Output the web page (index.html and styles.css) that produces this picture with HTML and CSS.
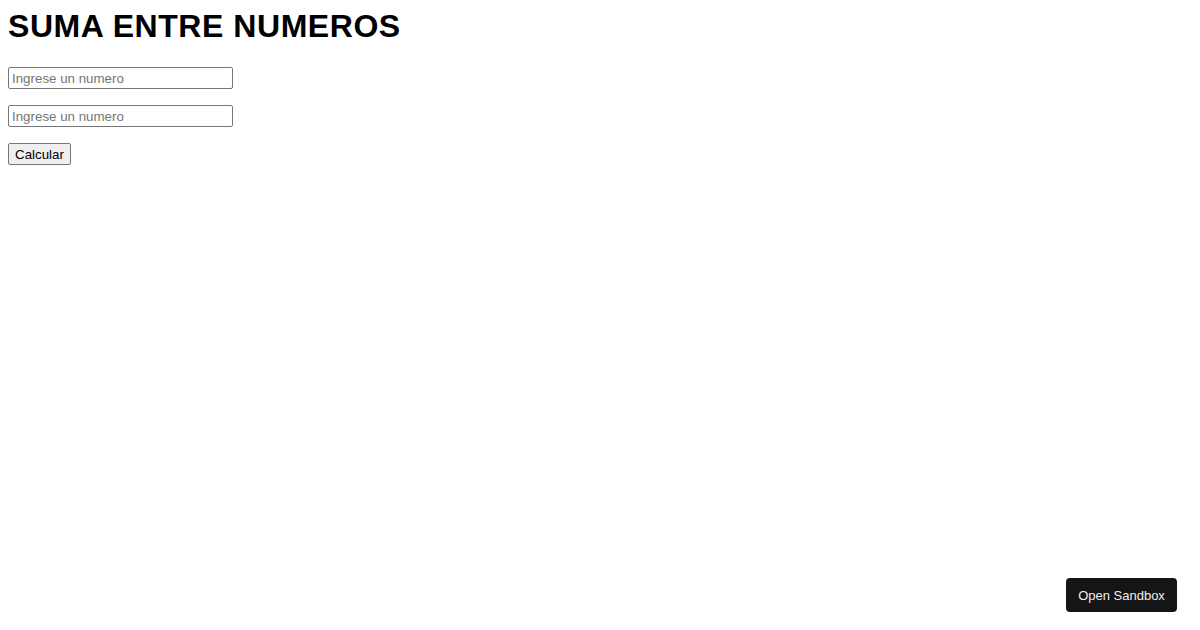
FILE: index.html
```html
<!DOCTYPE html>
<html>
<head>
<meta charset="utf-8">
<link rel="stylesheet" href="styles.css">
</head>
<body>
<h1 class="title">SUMA ENTRE NUMEROS</h1>
<p class="row"><input class="num" type="text" placeholder="Ingrese un numero"></p>
<p class="row"><input class="num" type="text" placeholder="Ingrese un numero"></p>
<p class="row"><button class="calc">Calcular</button></p>
<a class="sandbox">Open Sandbox</a>
</body>
</html>
```
FILE: styles.css
```css
body {
  margin: 8px;
  font-family: "Liberation Sans", Arial, sans-serif;
  background: #fff;
}
.title {
  margin: 0 0 22.44px;
  font-size: 32px;
  font-weight: bold;
  letter-spacing: 0.55px;
  color: #000;
}
.row {
  margin: 16px 0;
}
.num {
  font-family: "Liberation Sans", Arial, sans-serif;
  font-size: 13.33px;
  width: 225px;
  height: 22px;
  box-sizing: border-box;
  border: 1px solid #767676;
  border-radius: 2px;
  padding: 1px 3px;
  margin: 0;
}
.num::placeholder {
  color: #757575;
}
.calc {
  font-family: "Liberation Sans", Arial, sans-serif;
  font-size: 13.33px;
  height: 22px;
  padding: 1px 6px;
  margin: 0;
  border: 1px solid #767676;
  border-radius: 2px;
  background: #efefef;
  color: #000;
}
.sandbox {
  position: fixed;
  right: 23px;
  bottom: 18px;
  width: 111px;
  height: 34px;
  box-sizing: border-box;
  display: flex;
  align-items: center;
  justify-content: center;
  background: #151515;
  color: #f0f0f0;
  border-radius: 4px;
  font-family: "Liberation Sans", Arial, sans-serif;
  font-size: 13px;
}
```
